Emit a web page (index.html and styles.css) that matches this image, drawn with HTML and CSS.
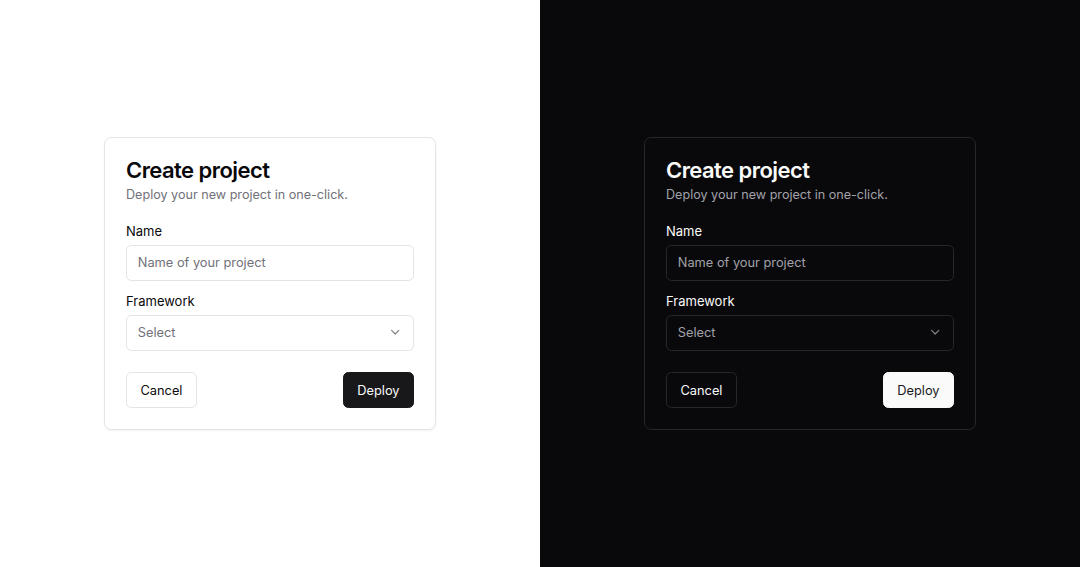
FILE: index.html
```html
<!DOCTYPE html>
<html lang="en">
<head>
<meta charset="utf-8">
<title>Create project</title>
<link rel="stylesheet" href="styles.css">
</head>
<body>
<div class="split">
  <section class="pane light">
    <div class="card">
      <div class="card-header">
        <h3 class="card-title">Create project</h3>
        <p class="card-desc">Deploy your new project in one-click.</p>
      </div>
      <div class="card-content">
        <div class="field">
          <label class="label">Name</label>
          <div class="input"><span class="placeholder">Name of your project</span></div>
        </div>
        <div class="field">
          <label class="label">Framework</label>
          <div class="input select"><span class="placeholder">Select</span>
            <svg class="chev" viewBox="0 0 24 24" fill="none" stroke="currentColor" stroke-width="2" stroke-linecap="round" stroke-linejoin="round"><path d="m6 9 6 6 6-6"/></svg>
          </div>
        </div>
      </div>
      <div class="card-footer">
        <button class="btn outline">Cancel</button>
        <button class="btn primary">Deploy</button>
      </div>
    </div>
  </section>
  <section class="pane dark">
    <div class="card">
      <div class="card-header">
        <h3 class="card-title">Create project</h3>
        <p class="card-desc">Deploy your new project in one-click.</p>
      </div>
      <div class="card-content">
        <div class="field">
          <label class="label">Name</label>
          <div class="input"><span class="placeholder">Name of your project</span></div>
        </div>
        <div class="field">
          <label class="label">Framework</label>
          <div class="input select"><span class="placeholder">Select</span>
            <svg class="chev" viewBox="0 0 24 24" fill="none" stroke="currentColor" stroke-width="2" stroke-linecap="round" stroke-linejoin="round"><path d="m6 9 6 6 6-6"/></svg>
          </div>
        </div>
      </div>
      <div class="card-footer">
        <button class="btn outline">Cancel</button>
        <button class="btn primary">Deploy</button>
      </div>
    </div>
  </section>
</div>
</body>
</html>
```

FILE: styles.css
```css
* { box-sizing: border-box; }
html, body { margin: 0; padding: 0; }
body {
  font-family: Inter, "Noto Sans", "Liberation Sans", sans-serif;
  width: 1080px;
  height: 567px;
  overflow: hidden;
}
.split { display: flex; height: 567px; }
.pane {
  width: 540px;
  height: 567px;
  display: flex;
  align-items: center;
  justify-content: center;
}
.light {
  --bg: #ffffff; --fg: #09090b; --muted: #71717a; --border: #e4e4e7;
  --pbg: #18181b; --pfg: #fafafa; --shadow: 0 1px 2px rgba(0,0,0,0.05);
  background: var(--bg);
}
.dark {
  --bg: #09090b; --fg: #fafafa; --muted: #a1a1aa; --border: #27272a;
  --pbg: #fafafa; --pfg: #18181b; --shadow: none;
  background: var(--bg);
}
.card {
  width: 332px;
  border: 1px solid var(--border);
  border-radius: 7.2px;
  background: var(--bg);
  color: var(--fg);
  box-shadow: var(--shadow);
}
.card-header {
  padding: 21.6px 21px 20.8px;
  display: flex;
  flex-direction: column;
  gap: 5px;
}
.card-title {
  margin: 0;
  font-size: 22px;
  line-height: 1;
  font-weight: 600;
  letter-spacing: -0.025em;
}
.card-desc {
  margin: 0;
  font-size: 12.6px;
  line-height: 18px;
  color: var(--muted);
}
.card-content {
  padding: 0 21px 21.6px;
  display: flex;
  flex-direction: column;
  gap: 14.4px;
}
.field { display: flex; flex-direction: column; gap: 6.5px; }
.label {
  font-size: 13px;
  line-height: 1;
  font-weight: 400;
}
.input {
  height: 36px;
  border: 1px solid var(--border);
  border-radius: 5.4px;
  padding: 0 10.8px;
  display: flex;
  align-items: center;
  font-size: 12.8px;
  background: var(--bg);
}
.placeholder { color: var(--muted); }
.select { justify-content: space-between; }
.chev { width: 14.4px; height: 14.4px; opacity: 0.5; color: var(--fg); }
.card-footer {
  padding: 0 21px 21px;
  display: flex;
  justify-content: space-between;
}
.btn {
  font-family: inherit;
  height: 36px;
  padding: 0 13.5px;
  border-radius: 5.4px;
  font-size: 12.8px;
  font-weight: 400;
  cursor: pointer;
}
.outline {
  background: var(--bg);
  color: var(--fg);
  border: 1px solid var(--border);
}
.primary {
  background: var(--pbg);
  color: var(--pfg);
  border: 1px solid var(--pbg);
}
```
